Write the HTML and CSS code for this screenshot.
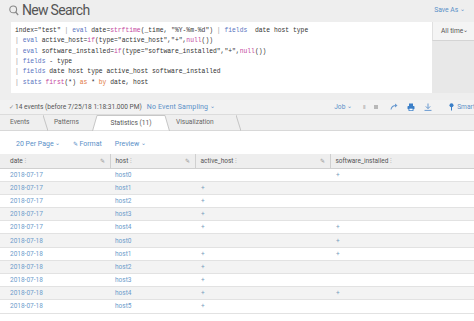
FILE: index.html
```html
<!DOCTYPE html>
<html>
<head>
<meta charset="utf-8">
<link rel="stylesheet" href="styles.css">
</head>
<body>
<div class="page">
  <header class="titlebar">
    <div class="title">
      <svg class="mag" width="10" height="11" viewBox="0 0 10 11"><circle cx="4.2" cy="4.4" r="3.4" fill="none" stroke="#888" stroke-width="1.1"/><line x1="6.6" y1="7" x2="9.2" y2="10" stroke="#888" stroke-width="1.2"/></svg>
      <span>New Search</span>
    </div>
    <a class="link saveas">Save As <span class="chev">⌄</span></a>
  </header>

  <div class="searchrow">
    <div class="code">
      <div class="ln"><span class="t">index="test"</span> <span class="p">|</span> <span class="c">eval</span> date=<span class="f">strftime</span>(_time, "%Y-%m-%d") <span class="p">|</span> <span class="c">fields</span>  date host type</div>
      <div class="ln"><span class="p">|</span> <span class="c">eval</span> active_host=<span class="f">if</span>(type="active_host","+",<span class="f">null</span>())</div>
      <div class="ln"><span class="p">|</span> <span class="c">eval</span> software_installed=<span class="f">if</span>(type="software_installed","+",<span class="f">null</span>())</div>
      <div class="ln"><span class="p">|</span> <span class="c">fields</span> - type</div>
      <div class="ln"><span class="p">|</span> <span class="c">fields</span> date host type active_host software_installed</div>
      <div class="ln"><span class="p">|</span> <span class="c">stats</span> <span class="f">first</span>(*) <span class="o">as</span> * <span class="o">by</span> date, host</div>
    </div>
    <div class="side">
      <div class="timebtn">All time <span class="chev">⌄</span></div>
    </div>
  </div>

  <div class="status">
    <div class="left">
      <span class="check">✓</span><span>14 events (before 7/25/18 1:18:31.000 PM)</span>
      <a class="link sampling">No Event Sampling <span class="chev">⌄</span></a>
    </div>
    <div class="jobbar">
      <a class="link job">Job <span class="chev">⌄</span></a>
      <span class="ic grey">II</span>
      <span class="sq"></span>
      <svg class="ic" width="8" height="7" viewBox="0 0 8 7"><path d="M1 6.5 C1.5 3.5 3.5 2.5 6 2.5" fill="none" stroke="#6a9ad0" stroke-width="1.1"/><path d="M5 0.5 L7.5 2.5 L5 4.5 Z" fill="#6a9ad0"/></svg>
      <svg class="ic" width="8" height="8" viewBox="0 0 8 8"><rect x="2" y="0.5" width="4" height="2.5" fill="#3b7fc8"/><rect x="0.5" y="3" width="7" height="3.2" rx="0.8" fill="#3b7fc8"/><rect x="2" y="5.2" width="4" height="2.5" fill="#fff" stroke="#3b7fc8" stroke-width="0.8"/></svg>
      <svg class="ic" width="8" height="8" viewBox="0 0 8 8"><path d="M4 0.5 V5.5 M1.8 3.4 L4 5.6 L6.2 3.4 M0.5 7.4 H7.5" fill="none" stroke="#6a9ad0" stroke-width="1"/></svg>
      <span class="smart"><svg width="5" height="8" viewBox="0 0 5 8"><circle cx="2.5" cy="2.2" r="2" fill="#3b7fc8"/><rect x="2" y="3.5" width="1" height="4" fill="#3b7fc8"/></svg><span class="link">Smart Mode</span></span>
    </div>
  </div>

  <nav class="tabs">
    <span class="tab t1">Events</span>
    <svg class="sep" width="5" height="16" viewBox="0 0 5 16"><line x1="0" y1="0" x2="5" y2="16" stroke="#c4c4c4" stroke-width="1"/></svg>
    <span class="tab t2">Patterns</span>
    <span class="tab active">Statistics (11)</span>
    <span class="tab t4">Visualization</span>
    <svg class="sep" width="5" height="16" viewBox="0 0 5 16"><line x1="0" y1="0" x2="5" y2="16" stroke="#c4c4c4" stroke-width="1"/></svg>
  </nav>

  <main class="content">
    <div class="toolbar">
      <a class="link">20 Per Page <span class="chev">⌄</span></a>
      <a class="link"><span class="pen">✎</span>Format</a>
      <a class="link">Preview <span class="chev">⌄</span></a>
    </div>
    <table class="grid">
      <colgroup><col class="c1"><col class="c2"><col class="c3"><col class="c4"></colgroup>
      <thead>
        <tr>
          <th><div class="hd"><span>date <span class="sort">⁝</span></span><span class="edit">✎</span></div></th>
          <th><div class="hd"><span>host <span class="sort">⁝</span></span><span class="edit">✎</span></div></th>
          <th><div class="hd"><span>active_host <span class="sort">⁝</span></span><span class="edit">✎</span></div></th>
          <th><div class="hd"><span>software_installed <span class="sort">⁝</span></span></div></th>
        </tr>
      </thead>
      <tbody>
        <tr><td>2018-07-17</td><td>host0</td><td></td><td>+</td></tr>
        <tr><td>2018-07-17</td><td>host1</td><td>+</td><td></td></tr>
        <tr><td>2018-07-17</td><td>host2</td><td>+</td><td></td></tr>
        <tr><td>2018-07-17</td><td>host3</td><td>+</td><td></td></tr>
        <tr><td>2018-07-17</td><td>host4</td><td>+</td><td>+</td></tr>
        <tr><td>2018-07-18</td><td>host0</td><td></td><td>+</td></tr>
        <tr><td>2018-07-18</td><td>host1</td><td>+</td><td>+</td></tr>
        <tr><td>2018-07-18</td><td>host2</td><td>+</td><td></td></tr>
        <tr><td>2018-07-18</td><td>host3</td><td>+</td><td></td></tr>
        <tr><td>2018-07-18</td><td>host4</td><td>+</td><td>+</td></tr>
        <tr><td>2018-07-18</td><td>host5</td><td>+</td><td></td></tr>
      </tbody>
    </table>
  </main>
</div>
</body>
</html>
```
FILE: styles.css
```css
* { box-sizing: border-box; }
html, body { margin: 0; padding: 0; }
body {
  width: 474px;
  height: 321px;
  overflow: hidden;
  background: #fff;
  font-family: Roboto, "Noto Sans", sans-serif;
  font-size: 6.6px;
  line-height: 1.25;
  color: #555;
}
.page { display: flex; flex-direction: column; width: 474px; overflow: hidden; }
.link { color: #5a90c8; text-decoration: none; white-space: nowrap; }
.chev { font-size: 6px; position: relative; top: -1px; }

.titlebar {
  background: #eeeeee;
  height: 22px;
  display: flex;
  align-items: center;
  justify-content: space-between;
  padding: 0 9px 0 9px;
}
.title { display: flex; align-items: center; gap: 3px; color: #555; }
.title span { font-size: 14px; line-height: 16px; letter-spacing: -0.7px; font-weight: 400; position: relative; top: -1px; }
.mag { position: relative; top: -1px; }
.saveas { font-size: 6.8px; position: relative; top: -1px; }

.searchrow { display: flex; background: #eeeeee; padding: 0 0 7px 11px; }
.code {
  width: 421px;
  height: 71px;
  background: #fff;
  padding: 4px 4px;
  font-family: "Liberation Mono", "DejaVu Sans Mono", monospace;
  font-size: 6.35px;
  line-height: 10.35px;
  color: #333;
  overflow: hidden;
}
.ln { white-space: pre; height: 10.35px; }
.code .p { color: #999; }
.code .c { color: #5a74c0; }
.code .f { color: #c4479e; }
.code .o { color: #e27a3f; }
.side { flex: 1; display: flex; flex-direction: column; background: #e8e8e8; }
.timebtn {
  height: 19px;
  background: #f4f4f4;
  border-bottom: 1px solid #d4d4d4;
  border-left: 1px solid #e0e0e0;
  display: flex;
  align-items: center;
  padding-left: 8px;
  font-size: 6.6px;
  color: #555;
  white-space: nowrap;
}

.status {
  background: #f2f2f2;
  height: 15px;
  display: flex;
  align-items: center;
  padding: 0 0 0 9px;
  border-bottom: 1px solid #dcdcdc;
  white-space: nowrap;
}
.status .left { display: flex; align-items: center; flex: 0 0 auto; }
.check { color: #8a8a8a; font-size: 6px; margin-right: 1px; }
.sampling { margin-left: 5px; font-size: 7px; letter-spacing: 0.15px; }
.jobbar { display: flex; align-items: center; margin-left: 119px; flex: 0 0 auto; }
.job { margin-right: 11px; }
.ic { margin-right: 9px; }
.grey { color: #b8b8b8; font-size: 5.5px; font-weight: 700; letter-spacing: -0.5px; margin-right: 9px; }
.sq { width: 4px; height: 4px; background: #b8b8b8; display: inline-block; margin-right: 12px; }
.smart { display: flex; align-items: center; gap: 3px; margin-left: 8px; white-space: nowrap; }

.tabs {
  background: #efefef;
  height: 16px;
  display: flex;
  align-items: stretch;
  border-bottom: 1px solid #d8d8d8;
}
.tab { display: flex; align-items: center; color: #666; font-size: 6.6px; white-space: nowrap; }
.t1 { width: 43px; padding-left: 10px; }
.t2 { width: 44px; padding-left: 6px; }
.active {
  width: 78px;
  justify-content: center;
  margin-bottom: -1px;
  background: url("data:image/svg+xml,%3Csvg xmlns='http://www.w3.org/2000/svg' width='78' height='17' preserveAspectRatio='none'%3E%3Cpolygon points='0.5,17 5,0.5 73,0.5 77.5,17' fill='%23ffffff' stroke='%23c4c4c4' stroke-width='1'/%3E%3C/svg%3E") no-repeat;
  background-size: 100% 100%;
  color: #555;
}
.t4 { width: 66px; padding-left: 6px; }

.content { background: #fff; padding-top: 8px; }
.toolbar { display: flex; gap: 13px; padding-left: 16px; height: 11px; align-items: center; font-size: 7px; }
.pen { font-size: 6px; margin-right: 1px; }

.grid {
  margin-top: 4px;
  width: 474px;
  border-collapse: collapse;
  table-layout: fixed;
  font-size: 6.5px;
  line-height: 8px;
}
.c1 { width: 110px; }
.c2 { width: 85px; }
.c3 { width: 135px; }
.c4 { width: 144px; }
.grid th {
  background: #eeeeee;
  height: 14px;
  font-weight: 400;
  color: #555;
  text-align: left;
  padding: 0 5px 0 5px;
  border-right: 1px solid #d0d0d0;
  border-bottom: 1px solid #d0d0d0;
  white-space: nowrap;
}
.grid th:first-child { padding-left: 10px; }
.hd { display: flex; justify-content: space-between; align-items: center; }
.sort { color: #bbb; }
.edit { color: #999; font-size: 6px; }
.grid td {
  height: 13.2px;
  padding: 0 5px;
  border-bottom: 1px solid #e2e2e2;
  color: #6b9bcb;
  white-space: nowrap;
}
.grid td:first-child { padding-left: 10px; }
.grid td:nth-child(3), .grid td:nth-child(4) { color: #7a9ec0; padding-left: 6px; }
.grid tbody tr:nth-child(even) td { background: #f3f3f3; }
```
